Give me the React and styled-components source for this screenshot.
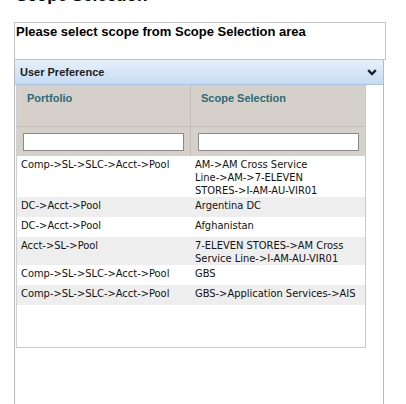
import React from "react";
import styled, { createGlobalStyle } from "styled-components";

const rows = [
  { portfolio: "Comp->SL->SLC->Acct->Pool", scope: ["AM->AM Cross Service", "Line->AM->7-ELEVEN", "STORES->I-AM-AU-VIR01"] },
  { portfolio: "DC->Acct->Pool", scope: ["Argentina DC"] },
  { portfolio: "DC->Acct->Pool", scope: ["Afghanistan"] },
  { portfolio: "Acct->SL->Pool", scope: ["7-ELEVEN STORES->AM Cross", "Service Line->I-AM-AU-VIR01"] },
  { portfolio: "Comp->SL->SLC->Acct->Pool", scope: ["GBS"] },
  { portfolio: "Comp->SL->SLC->Acct->Pool", scope: ["GBS->Application Services->AIS"] },
];

function App() {
  return (
    <>
      <GlobalStyle />
      <Page>
        <Title>Scope Selection</Title>
        <MessageBox>Please select scope from Scope Selection area</MessageBox>
        <Panel>
          <PanelHeader>
            <span>User Preference</span>
            <svg width="10" height="7" viewBox="0 0 10 7">
              <polyline points="1.2,1.2 5,5 8.8,1.2" fill="none" stroke="#1b2230" strokeWidth="2.4" />
            </svg>
          </PanelHeader>
          <PanelBody>
            <Grid>
              <HeaderRow>
                <HeaderCell>Portfolio</HeaderCell>
                <HeaderCell>Scope Selection</HeaderCell>
              </HeaderRow>
              <FilterRow>
                <FilterCell>
                  <FilterInput />
                </FilterCell>
                <FilterCell>
                  <FilterInput />
                </FilterCell>
              </FilterRow>
              {rows.map((row, i) => (
                <DataRow key={i} alt={i % 2 === 1}>
                  <DataCell>{row.portfolio}</DataCell>
                  <DataCell>
                    {row.scope.map((line, j) => (
                      <Line key={j}>{line}</Line>
                    ))}
                  </DataCell>
                </DataRow>
              ))}
              <Filler />
            </Grid>
          </PanelBody>
        </Panel>
      </Page>
    </>
  );
}

const GlobalStyle = createGlobalStyle`
  body {
    margin: 0;
    background: #ffffff;
    font-family: "Liberation Sans", Arial, sans-serif;
    overflow: hidden;
  }
`;

const Page = styled.div`
  padding: 0 20px 0 14px;
`;

const Title = styled.h2`
  margin: -14px 0 0 2px;
  font-size: 17px;
  line-height: 20px;
  font-weight: 700;
  color: #000;
`;

const MessageBox = styled.div`
  margin-top: 16px;
  box-sizing: border-box;
  width: 372px;
  height: 38px;
  border: 1px solid #c4c4c4;
  padding: 1px 1px;
  font-size: 13px;
  line-height: 16px;
  font-weight: 700;
  color: #000;
`;

const Panel = styled.div`
  width: 370px;
  box-sizing: border-box;
  height: 360px;
  border-left: 1px solid #b3bcc6;
  border-right: 1px solid #b3bcc6;
  background: #ffffff;
`;

const PanelHeader = styled.div`
  height: 25px;
  box-sizing: border-box;
  display: flex;
  align-items: center;
  justify-content: space-between;
  padding: 0 6px 0 5px;
  background: linear-gradient(#e6f0fb, #c6dbf3);
  border-bottom: 1px solid #a9c4e3;
  font-size: 11px;
  font-weight: 700;
  color: #1c1c1c;

  svg {
    margin-top: 1px;
  }
`;

const PanelBody = styled.div`
  padding: 0 0 0 1px;
`;

const Grid = styled.div`
  width: 350px;
  box-sizing: border-box;
  border-left: 1px solid #cfcfcf;
  border-right: 1px solid #c8c8c8;
  border-bottom: 1px solid #c8c8c8;
  background: #ffffff;
`;

const HeaderRow = styled.div`
  display: grid;
  grid-template-columns: 174px 1fr;
  height: 42px;
  box-sizing: border-box;
  background: #d5d1ca;
  border-bottom: 1px solid #c3bfb8;
`;

const HeaderCell = styled.div`
  padding: 7px 10px;
  font-size: 11px;
  font-weight: 700;
  line-height: 13px;
  color: #2c6a78;

  &:first-child {
    border-right: 1px solid #c3bfb8;
  }
`;

const FilterRow = styled.div`
  display: grid;
  grid-template-columns: 174px 1fr;
  height: 29px;
  background: #d5d1ca;
`;

const FilterCell = styled.div`
  display: flex;
  justify-content: center;
  padding-top: 6px;

  &:first-child {
    border-right: 1px solid #c3bfb8;
  }
`;

const FilterInput = styled.input`
  width: 161px;
  height: 18px;
  box-sizing: border-box;
  margin: 0;
  padding: 0 2px;
  border: 1px solid #8a8a8a;
  background: #ffffff;
  outline: none;
`;

const DataRow = styled.div`
  display: grid;
  grid-template-columns: 174px 1fr;
  min-height: 20px;
  box-sizing: border-box;
  padding-top: 2px;
  background: ${(p) => (p.alt ? "#eeeeee" : "#ffffff")};
`;

const DataCell = styled.div`
  padding: 0 4px;
  font-family: "DejaVu Sans Condensed", "DejaVu Sans", sans-serif;
  font-stretch: condensed;
  font-size: 11px;
  line-height: 13px;
  color: #111111;
`;

const Line = styled.div`
  white-space: nowrap;
`;

const Filler = styled.div`
  height: 42px;
`;

export default App;
